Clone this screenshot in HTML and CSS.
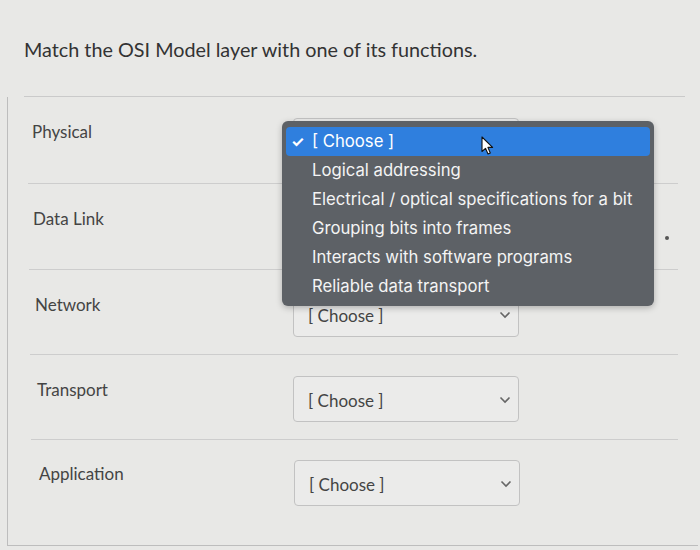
FILE: index.html
```html
<!DOCTYPE html>
<html>
<head>
<meta charset="utf-8">
<link rel="stylesheet" href="styles.css">
</head>
<body>
<div class="page">
  <div class="title">Match the OSI Model layer with one of its functions.</div>
  <div class="answers">
    <div class="row">
      <div class="label">Physical</div>
      <div class="select"><span>[ Choose ]</span><svg class="chev" width="12" height="8" viewBox="0 0 12 8"><path d="M1.5 1.5 L6 6 L10.5 1.5" fill="none" stroke="#666" stroke-width="1.6"/></svg></div>
    </div>
    <div class="row">
      <div class="label">Data Link</div>
      <div class="select"><span>[ Choose ]</span><svg class="chev" width="12" height="8" viewBox="0 0 12 8"><path d="M1.5 1.5 L6 6 L10.5 1.5" fill="none" stroke="#666" stroke-width="1.6"/></svg></div>
    </div>
    <div class="row">
      <div class="label">Network</div>
      <div class="select"><span>[ Choose ]</span><svg class="chev" width="12" height="8" viewBox="0 0 12 8"><path d="M1.5 1.5 L6 6 L10.5 1.5" fill="none" stroke="#666" stroke-width="1.6"/></svg></div>
    </div>
    <div class="row">
      <div class="label">Transport</div>
      <div class="select"><span>[ Choose ]</span><svg class="chev" width="12" height="8" viewBox="0 0 12 8"><path d="M1.5 1.5 L6 6 L10.5 1.5" fill="none" stroke="#666" stroke-width="1.6"/></svg></div>
    </div>
    <div class="row last">
      <div class="label">Application</div>
      <div class="select"><span>[ Choose ]</span><svg class="chev" width="12" height="8" viewBox="0 0 12 8"><path d="M1.5 1.5 L6 6 L10.5 1.5" fill="none" stroke="#666" stroke-width="1.6"/></svg></div>
    </div>
  </div>
  <div class="dot"></div>
  <div class="menu">
    <div class="opt selected"><span class="check">✓</span>[ Choose ]</div>
    <div class="opt">Logical addressing</div>
    <div class="opt">Electrical / optical specifications for a bit</div>
    <div class="opt">Grouping bits into frames</div>
    <div class="opt">Interacts with software programs</div>
    <div class="opt">Reliable data transport</div>
  </div>
  <svg class="cursor" width="14" height="20" viewBox="0 0 14 20"><path d="M1 1 L1 15.5 L4.5 12.3 L7 18 L9.3 17 L6.9 11.4 L11.6 11.4 Z" fill="#fff" stroke="#111" stroke-width="1.1" stroke-linejoin="round"/></svg>
</div>
</body>
</html>
```

FILE: styles.css
```css
html, body {
  margin: 0;
  padding: 0;
}
body {
  background: #e8e8e6;
  font-family: Lato, "Liberation Sans", sans-serif;
  color: #3c3c3c;
}
.page {
  position: relative;
  width: 700px;
  height: 550px;
  overflow: hidden;
}
.title {
  margin: 0 15px 0 24px;
  padding-top: 37px;
  box-sizing: border-box;
  height: 97px;
  font-size: 19.8px;
  color: #333;
  border-bottom: 1px solid #cacaca;
}
.answers {
  margin-left: 7px;
  width: 690px;
  height: 448px;
  border-left: 1px solid #bdbdbd;
  border-bottom: 1px solid #bdbdbd;
}
.row {
  display: flex;
  margin: 0 20px 0 20px;
  height: 84px;
  border-bottom: 1px solid #cdcdcd;
}
.row:nth-child(1) {
  height: 86px;
}
.row:nth-child(2) {
  height: 85px;
  margin-left: 21px;
}
.row:nth-child(3) {
  margin-left: 22px;
}
.row:nth-child(4) {
  margin-left: 23px;
}
.row.last {
  border-bottom: none;
  margin-left: 24px;
}
.label {
  width: 265px;
  padding-left: 4px;
  padding-top: 24px;
  font-size: 17px;
  color: #444;
  box-sizing: border-box;
}
.row:nth-child(3) .label { padding-left: 5px; width: 263px; }
.row:nth-child(4) .label { padding-left: 6px; width: 262px; }
.row.last .label { padding-left: 7px; width: 262px; padding-top: 23px; }
.select {
  margin-top: 21px;
  width: 226px;
  height: 46px;
  box-sizing: border-box;
  border: 1px solid #c2c2c2;
  border-radius: 4px;
  background: #ebebea;
  display: flex;
  align-items: center;
  justify-content: space-between;
  padding: 2px 7px 0 14px;
  font-size: 17px;
  color: #444;
}
.row.last .select {
  margin-top: 20px;
}
.chev {
  display: block;
}
.dot {
  position: absolute;
  left: 665px;
  top: 236px;
  width: 4px;
  height: 4px;
  border-radius: 50%;
  background: #555;
}
.menu {
  position: absolute;
  left: 282px;
  top: 121px;
  width: 372px;
  height: 185px;
  box-sizing: border-box;
  padding: 6px 4px;
  background: #5d6166;
  border-radius: 6px;
  box-shadow: 0 2px 6px rgba(0,0,0,0.25);
  font-family: Inter, "Liberation Sans", Arial, sans-serif;
  font-size: 16.7px;
  color: #f4f4f4;
}
.opt {
  position: relative;
  height: 29px;
  line-height: 29px;
  padding-left: 26px;
  border-radius: 4px;
  white-space: nowrap;
}
.opt.selected {
  background: #2f7fde;
  color: #fff;
}
.check {
  position: absolute;
  left: 5px;
  top: 0;
  font-size: 15px;
  font-weight: bold;
}
.cursor {
  position: absolute;
  left: 481px;
  top: 136px;
}
```
